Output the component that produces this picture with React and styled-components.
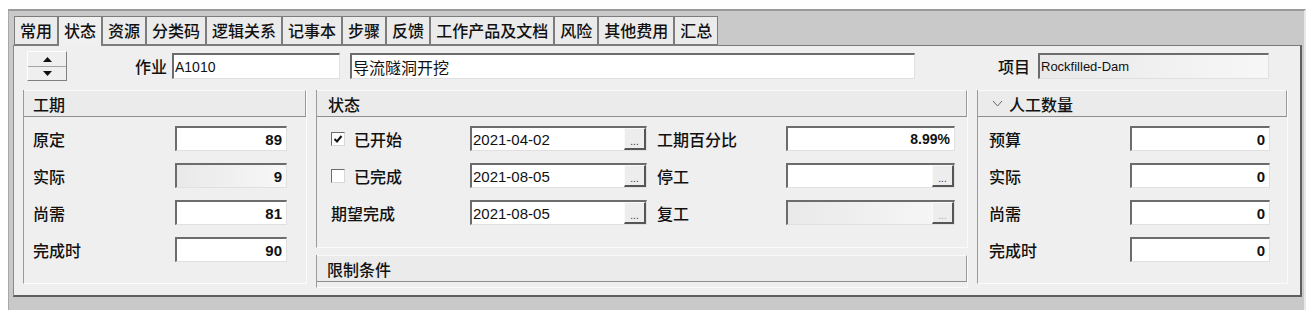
import React from "react";
import styled, { createGlobalStyle } from "styled-components";

const GlobalStyle = createGlobalStyle`
  html, body { margin: 0; padding: 0; background: #fff; }
  body { font-family: "Noto Sans CJK SC", "Liberation Sans", sans-serif; color: #111; font-weight: 500; }
`;

const Window = styled.div`
  margin: 9px 0 0 8px;
  width: 1298px;
  height: 301px;
  box-sizing: border-box;
  background: #c9c9c9;
  border-top: 2px solid #9a9a9a;
  border-left: 1px solid #a8a8a8;
  border-right: 2px solid #e8e8e8;
  padding: 5px 0 0 4px;
`;

const TabStrip = styled.div`
  display: flex;
  height: 29px;
  padding-left: 1px;
  position: relative;
  z-index: 2;
`;

const Tab = styled.div`
  box-sizing: border-box;
  height: ${(p) => (p.$active ? "30px" : "29px")};
  padding: 0 5px;
  border: 1px solid #7c7c7c;
  border-bottom: ${(p) => (p.$active ? "none" : "1px solid #7c7c7c")};
  background: ${(p) => (p.$active ? "#f0f0f0" : "#ebebeb")};
  font-size: 16px;
  line-height: 26px;
  white-space: nowrap;
`;

const Panel = styled.div`
  box-sizing: border-box;
  width: 1289px;
  height: 252px;
  background: #efefef;
  border-top: 1px solid #7c7c7c;
  border-left: 1px solid #8a8a8a;
  border-right: 2px solid #5e5e5e;
  border-bottom: 2px solid #5e5e5e;
  padding: 5px 0 0 9px;
  position: relative;
  z-index: 1;
`;

const TopRow = styled.div`
  display: flex;
  align-items: center;
  height: 30px;
  padding-left: 4px;
`;

const Spinner = styled.div`
  box-sizing: border-box;
  width: 40px;
  height: 30px;
  display: flex;
  flex-direction: column;
  border-top: 1px solid #fff;
  border-left: 1px solid #fff;
  border-right: 1px solid #808080;
  border-bottom: 1px solid #808080;
`;

const SpinHalf = styled.div`
  flex: 1;
  display: flex;
  align-items: ${(p) => (p.$top ? "flex-end" : "flex-start")};
  padding: ${(p) => (p.$top ? "0 0 4px" : "4px 0 0")};
  justify-content: center;
  border-bottom: ${(p) => (p.$top ? "1px solid #a4a4a4" : "none")};
`;

const Label = styled.div`
  font-size: 16px;
  white-space: nowrap;
  width: ${(p) => (p.$w ? `${p.$w}px` : "auto")};
  text-align: ${(p) => (p.$right ? "right" : "left")};
  margin-right: ${(p) => p.$mr || 0}px;
  box-sizing: border-box;
`;

const Field = styled.div`
  box-sizing: border-box;
  width: ${(p) => p.$w}px;
  height: ${(p) => p.$h || 25}px;
  margin-right: ${(p) => p.$mr || 0}px;
  background: ${(p) => (p.$disabled ? "linear-gradient(90deg, #e9e9e9, #f7f7f7)" : "#fff")};
  border-top: 2px solid #6c6c6c;
  border-left: 2px solid #6c6c6c;
  border-right: 1px solid #e0e0e0;
  border-bottom: 1px solid #e0e0e0;
  display: flex;
  align-items: center;
  justify-content: ${(p) => (p.$right ? "flex-end" : "flex-start")};
  padding: ${(p) => (p.$right ? "0 4px 0 2px" : "0 0 0 1px")};
  font-family: "Liberation Sans", Arial, sans-serif;
  font-size: ${(p) => p.$fs || 15}px;
  font-weight: ${(p) => (p.$bold ? 700 : 400)};
  color: #111;
  white-space: nowrap;
  overflow: hidden;
`;

const FieldText = styled.span`
  flex: 1;
  font-family: "Liberation Sans", "Noto Sans CJK SC", sans-serif;
`;

const DotsButton = styled.div`
  box-sizing: border-box;
  width: 22px;
  height: 100%;
  flex-shrink: 0;
  background: #ededed;
  border-top: 1px solid #fafafa;
  border-left: 1px solid #fafafa;
  border-right: 2px solid #555;
  border-bottom: 2px solid #555;
  display: flex;
  align-items: flex-end;
  justify-content: center;
  font-size: 10px;
  line-height: 10px;
  font-weight: 400;
  color: ${(p) => (p.$disabled ? "#a8a8a8" : "#333")};
  padding-bottom: 1px;
`;

const Sections = styled.div`
  display: flex;
  gap: 9px;
  margin-top: 9px;
`;

const Column = styled.div`
  display: flex;
  flex-direction: column;
  gap: 7px;
`;

const Group = styled.div`
  box-sizing: border-box;
  width: ${(p) => p.$w}px;
  height: ${(p) => p.$h}px;
  border-left: 1px solid #9a9a9a;
  border-bottom: 1px solid #fbfbfb;
  border-right: 1px solid #fbfbfb;
`;

const GroupHeader = styled.div`
  box-sizing: border-box;
  height: 27px;
  display: flex;
  align-items: center;
  gap: 6px;
  padding-left: ${(p) => p.$pl || 9}px;
  background: #ebebeb;
  border-top: 1px solid #fafafa;
  border-bottom: 1px solid #8e8e8e;
  border-right: 1px solid #9a9a9a;
  font-size: 16px;
`;

const GroupBody = styled.div`
  display: grid;
  grid-template-columns: ${(p) => p.$cols};
  grid-auto-rows: 25px;
  row-gap: 12px;
  align-items: center;
  padding: 9px 0 0 ${(p) => p.$pl}px;
`;

const CheckCell = styled.div`
  display: flex;
  align-items: center;
  gap: 9px;
  font-size: 16px;
`;

const CheckBox = styled.div`
  box-sizing: border-box;
  width: 14px;
  height: 14px;
  background: #fff;
  border-top: 1px solid #6c6c6c;
  border-left: 1px solid #6c6c6c;
  border-right: 1px solid #d8d8d8;
  border-bottom: 1px solid #d8d8d8;
  display: flex;
  align-items: center;
  justify-content: center;
`;

const tabs = ["常用", "状态", "资源", "分类码", "逻辑关系", "记事本", "步骤", "反馈", "工作产品及文档", "风险", "其他费用", "汇总"];

const durations = [
  { label: "原定", value: "89" },
  { label: "实际", value: "9", disabled: true },
  { label: "尚需", value: "81" },
  { label: "完成时", value: "90" },
];

const labor = ["预算", "实际", "尚需", "完成时"];

const Arrow = ({ up }) => (
  <svg width="9" height="5" viewBox="0 0 9 5">
    <path d={up ? "M0 5 L4.5 0 L9 5 Z" : "M0 0 L4.5 5 L9 0 Z"} fill="#111" />
  </svg>
);

const Check = () => (
  <svg width="10" height="10" viewBox="0 0 10 10">
    <path d="M1.5 5 L4 7.5 L8.5 2" stroke="#111" strokeWidth="2" fill="none" />
  </svg>
);

const Chevron = () => (
  <svg width="11" height="7" viewBox="0 0 11 7">
    <path d="M1 1 L5.5 6 L10 1" stroke="#666" strokeWidth="1" fill="none" />
  </svg>
);

const DateField = ({ value, disabled }) => (
  <Field $w={177}>
    <FieldText>{value}</FieldText>
    <DotsButton $disabled={disabled}>...</DotsButton>
  </Field>
);

export default function App() {
  return (
    <>
      <GlobalStyle />
      <Window>
        <TabStrip>
          {tabs.map((t) => (
            <Tab key={t} $active={t === "状态"}>
              {t}
            </Tab>
          ))}
        </TabStrip>
        <Panel>
          <TopRow>
            <Spinner>
              <SpinHalf $top>
                <Arrow up />
              </SpinHalf>
              <SpinHalf>
                <Arrow />
              </SpinHalf>
            </Spinner>
            <Label $w={100} $right $mr={5}>作业</Label>
            <Field $w={168} $h={26} $mr={10} $fs={14}>
              <FieldText>A1010</FieldText>
            </Field>
            <Field $w={565} $h={26} $fs={16}>
              <FieldText>导流隧洞开挖</FieldText>
            </Field>
            <Label $w={115} $right $mr={8}>项目</Label>
            <Field $w={231} $h={26} $fs={13} $disabled>
              <FieldText>Rockfilled-Dam</FieldText>
            </Field>
          </TopRow>

          <Sections>
            <Group $w={284} $h={194}>
              <GroupHeader>工期</GroupHeader>
              <GroupBody $cols="142px 112px" $pl={9}>
                {durations.map((d) => (
                  <React.Fragment key={d.label}>
                    <Label>{d.label}</Label>
                    <Field $w={112} $right $bold $disabled={d.disabled}>
                      {d.value}
                    </Field>
                  </React.Fragment>
                ))}
              </GroupBody>
            </Group>

            <Column>
              <Group $w={652} $h={158}>
                <GroupHeader $pl={11}>状态</GroupHeader>
                <GroupBody $cols="139px 187px 129px 169px" $pl={14}>
                  <CheckCell>
                    <CheckBox>
                      <Check />
                    </CheckBox>
                    已开始
                  </CheckCell>
                  <DateField value="2021-04-02" />
                  <Label>工期百分比</Label>
                  <Field $w={169} $right $bold $fs={14}>
                    8.99%
                  </Field>

                  <CheckCell>
                    <CheckBox />
                    已完成
                  </CheckCell>
                  <DateField value="2021-08-05" />
                  <Label>停工</Label>
                  <Field $w={169}>
                    <FieldText />
                    <DotsButton>...</DotsButton>
                  </Field>

                  <Label>期望完成</Label>
                  <DateField value="2021-08-05" />
                  <Label>复工</Label>
                  <Field $w={169} $disabled>
                    <FieldText />
                    <DotsButton $disabled>...</DotsButton>
                  </Field>
                </GroupBody>
              </Group>
              <Group $w={652} $h={33}>
                <GroupHeader $pl={10}>限制条件</GroupHeader>
              </Group>
            </Column>

            <Group $w={311} $h={194}>
              <GroupHeader $pl={14}>
                <Chevron />
                人工数量
              </GroupHeader>
              <GroupBody $cols="141px 140px" $pl={11}>
                {labor.map((l) => (
                  <React.Fragment key={l}>
                    <Label>{l}</Label>
                    <Field $w={140} $right $bold>
                      0
                    </Field>
                  </React.Fragment>
                ))}
              </GroupBody>
            </Group>
          </Sections>
        </Panel>
      </Window>
    </>
  );
}
